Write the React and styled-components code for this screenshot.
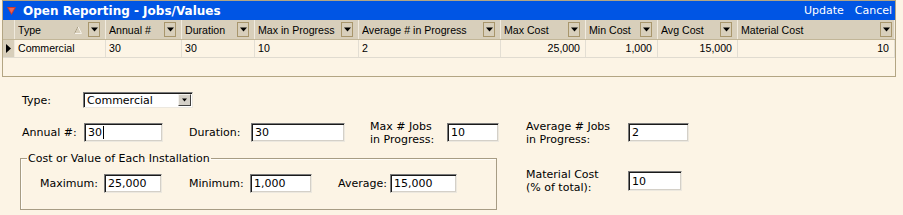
import React from "react";
import styled, { createGlobalStyle } from "styled-components";

const cream = "#fcf4e5";
const tan = "#d8cfbb";
const frameTan = "#b3a583";
const gridFont = `"Liberation Sans", Arial, sans-serif`;
const formFont = `"DejaVu Sans", Verdana, sans-serif`;

const GlobalStyle = createGlobalStyle`
  body {
    margin: 0;
    background: ${cream};
    font-family: ${formFont};
  }
`;

const Page = styled.div`
  width: 903px;
  height: 215px;
  background: ${cream};
  overflow: hidden;
`;

const GridFrame = styled.div`
  margin-left: 2px;
  width: 894px;
  box-sizing: border-box;
  border: 1px solid ${frameTan};
  background: ${cream};
`;

const TitleBar = styled.div`
  display: flex;
  align-items: center;
  height: 19px;
  padding: 0 3px 0 4px;
  background: #0055e4;
  color: #fff;
`;

const Title = styled.div`
  margin-left: 7px;
  font: bold 12px ${formFont};
`;

const Actions = styled.div`
  margin-left: auto;
  display: flex;
  gap: 11px;
  font: 11px ${formFont};
`;

const ActionLink = styled.span`
  cursor: pointer;
`;

const HeaderRow = styled.div`
  display: flex;
  height: 20px;
  background: ${tan};
  border-bottom: 1px solid #c2b698;
  box-sizing: border-box;
`;

const DataRow = styled.div`
  display: flex;
  height: 18px;
  box-sizing: border-box;
  border-bottom: 1px solid #e0dbd0;
`;

const SelectorCell = styled.div`
  width: 12px;
  flex: none;
  display: flex;
  align-items: center;
  justify-content: center;
  background: ${tan};
  border-right: 1px solid #efe9dc;
  box-sizing: border-box;
`;

const HeaderCell = styled.div`
  width: ${(p) => p.$width}px;
  flex: none;
  display: flex;
  align-items: center;
  box-sizing: border-box;
  padding: 0 ${(p) => (p.$last ? 2 : 5)}px 0 3px;
  border-right: 1px solid #f1ebdf;
  font: 10.6px ${gridFont};
  color: #000;
`;

const HeaderText = styled.span`
  flex: 1;
  white-space: nowrap;
  overflow: hidden;
`;

const DropButton = styled.div`
  width: 12px;
  height: 15px;
  flex: none;
  display: flex;
  align-items: center;
  justify-content: center;
  box-sizing: border-box;
  border: 1px solid #a8966c;
  background: ${tan};
`;

const SortMark = styled.svg`
  margin-right: 6px;
  flex: none;
`;

const DataCell = styled.div`
  width: ${(p) => p.$width}px;
  flex: none;
  box-sizing: border-box;
  padding: 0 5px 0 3px;
  border-right: 1px solid #e3ded3;
  font: 10.6px/17px ${gridFont};
  text-align: ${(p) => (p.$numeric ? "right" : "left")};
  white-space: nowrap;
`;

const EmptyArea = styled.div`
  height: 18px;
`;

const FormArea = styled.div`
  padding: 15px 0 0 20px;
`;

const FormRow = styled.div`
  display: flex;
  align-items: center;
  margin-top: ${(p) => p.$top || 0}px;
  padding-left: ${(p) => p.$indent || 0}px;
`;

const Field = styled.div`
  display: flex;
  align-items: center;
  margin-right: ${(p) => p.$gap || 0}px;
`;

const Label = styled.div`
  width: ${(p) => p.$width}px;
  flex: none;
  font: 11px/13px ${formFont};
  color: #000;
  white-space: nowrap;
  padding-top: ${(p) => (p.$twoLine ? 2 : 0)}px;
`;

const TextBox = styled.div`
  width: ${(p) => p.$width}px;
  height: ${(p) => p.$height || 19}px;
  box-sizing: border-box;
  display: flex;
  align-items: center;
  padding-left: 3px;
  background: #fff;
  border: 1px solid;
  border-color: #7a7a7a #ece8df #ece8df #7a7a7a;
  box-shadow: inset 1px 1px 0 #1a1a1a, inset -1px -1px 0 #d4d0c8;
  font: 11px ${formFont};
  color: #000;
`;

const Caret = styled.span`
  display: inline-block;
  width: 1px;
  height: 13px;
  margin-left: 1px;
  background: #000;
`;

const Select = styled.div`
  width: 110px;
  height: 16px;
  box-sizing: border-box;
  display: flex;
  align-items: stretch;
  background: #fff;
  border: 1px solid;
  border-color: #7a7a7a #ece8df #ece8df #7a7a7a;
  box-shadow: inset 1px 1px 0 #1a1a1a;
  font: 11px/14px ${formFont};
`;

const SelectText = styled.span`
  flex: 1;
  padding-left: 3px;
  padding-top: 1px;
`;

const SelectButton = styled.div`
  width: 13px;
  display: flex;
  align-items: center;
  justify-content: center;
  background: #d4d0c8;
  border: 1px solid;
  border-color: #f4f2ee #404040 #404040 #f4f2ee;
  box-sizing: border-box;
  margin: 1px 1px 1px 0;
`;

const GroupBox = styled.fieldset`
  width: 477px;
  box-sizing: border-box;
  margin: 0 29px 0 0;
  padding: 9px 0 16px 19px;
  border: 1px solid #a79c84;
  box-shadow: inset 1px 1px 0 #fffdf8;
  display: flex;
  align-items: center;
`;

const GroupLegend = styled.legend`
  margin-left: -13px;
  padding: 0 1px;
  font: 11px/13px ${formFont};
  color: #000;
`;

const DownArrow = ({ size = 7 }) => (
  <svg width={size} height={Math.ceil(size / 2) + 1} viewBox="0 0 7 4">
    <path d="M0 0h7L3.5 4z" fill="#000" />
  </svg>
);

const columns = [
  { title: "Type", width: 91, value: "Commercial", sorted: true },
  { title: "Annual #", width: 76, value: "30" },
  { title: "Duration", width: 73, value: "30" },
  { title: "Max in Progress", width: 104, value: "10" },
  { title: "Average # in Progress", width: 142, value: "2" },
  { title: "Max Cost", width: 85, value: "25,000", numeric: true },
  { title: "Min Cost", width: 72, value: "1,000", numeric: true },
  { title: "Avg Cost", width: 80, value: "15,000", numeric: true },
  { title: "Material Cost", width: 157, value: "10", numeric: true },
];

function JobsGrid() {
  return (
    <GridFrame>
      <TitleBar>
        <svg width="9" height="8" viewBox="0 0 9 8">
          <path d="M0 0h9L4.5 8z" fill="#d2392b" />
          <path d="M1.5 1h6L4.5 6z" fill="#e8675a" />
        </svg>
        <Title>Open Reporting - Jobs/Values</Title>
        <Actions>
          <ActionLink>Update</ActionLink>
          <ActionLink>Cancel</ActionLink>
        </Actions>
      </TitleBar>
      <HeaderRow>
        <SelectorCell />
        {columns.map((c, i) => (
          <HeaderCell key={c.title} $width={c.width} $last={i === columns.length - 1}>
            <HeaderText>{c.title}</HeaderText>
            {c.sorted && (
              <SortMark width="8" height="8" viewBox="0 0 8 8">
                <path d="M4 0.5L7.5 7.5H0.5z" fill="none" stroke="#f6f2ea" />
                <path d="M4 0.5L0.5 7.5" stroke="#a99d82" />
              </SortMark>
            )}
            <DropButton>
              <DownArrow />
            </DropButton>
          </HeaderCell>
        ))}
      </HeaderRow>
      <DataRow>
        <SelectorCell>
          <svg width="5" height="9" viewBox="0 0 5 9">
            <path d="M0 0l5 4.5L0 9z" fill="#000" />
          </svg>
        </SelectorCell>
        {columns.map((c) => (
          <DataCell key={c.title} $width={c.width} $numeric={c.numeric}>
            {c.value}
          </DataCell>
        ))}
      </DataRow>
      <EmptyArea />
    </GridFrame>
  );
}

function JobForm() {
  return (
    <FormArea>
      <FormRow $indent={2}>
        <Label $width={61}>Type:</Label>
        <Select>
          <SelectText>Commercial</SelectText>
          <SelectButton>
            <DownArrow size={5} />
          </SelectButton>
        </Select>
      </FormRow>

      <FormRow $top={10} $indent={2}>
        <Field $gap={26}>
          <Label $width={62}>Annual #:</Label>
          <TextBox $width={79}>
            30
            <Caret />
          </TextBox>
        </Field>
        <Field $gap={25}>
          <Label $width={62}>Duration:</Label>
          <TextBox $width={94}>30</TextBox>
        </Field>
        <Field $gap={27}>
          <Label $width={77} $twoLine>
            Max # Jobs
            <br />
            in Progress:
          </Label>
          <TextBox $width={52}>10</TextBox>
        </Field>
        <Field>
          <Label $width={102} $twoLine>
            Average # Jobs
            <br />
            in Progress:
          </Label>
          <TextBox $width={61}>2</TextBox>
        </Field>
      </FormRow>

      <FormRow $top={6}>
        <GroupBox>
          <GroupLegend>Cost or Value of Each Installation</GroupLegend>
          <Field $gap={27}>
            <Label $width={64}>Maximum:</Label>
            <TextBox $width={58}>25,000</TextBox>
          </Field>
          <Field $gap={26}>
            <Label $width={61}>Minimum:</Label>
            <TextBox $width={62}>1,000</TextBox>
          </Field>
          <Field>
            <Label $width={52}>Average:</Label>
            <TextBox $width={67}>15,000</TextBox>
          </Field>
        </GroupBox>
        <Field>
          <Label $width={102}>
            Material Cost
            <br />
            (% of total):
          </Label>
          <TextBox $width={54} $height={20}>
            10
          </TextBox>
        </Field>
      </FormRow>
    </FormArea>
  );
}

export default function App() {
  return (
    <Page>
      <GlobalStyle />
      <JobsGrid />
      <JobForm />
    </Page>
  );
}
